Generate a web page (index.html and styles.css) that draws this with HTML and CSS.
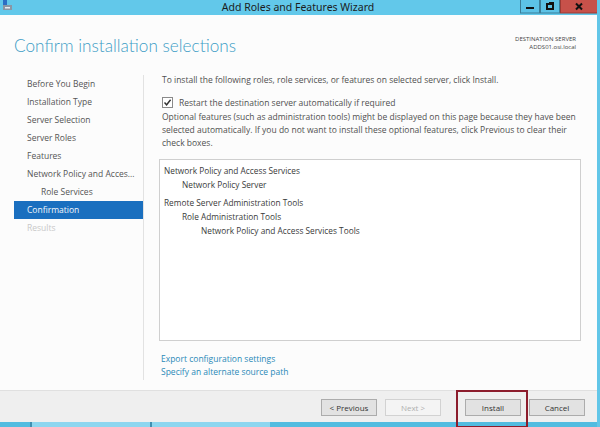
FILE: index.html
```html
<!DOCTYPE html>
<html>
<head>
    <title>Add Roles and Features Wizard</title>
    <link rel="stylesheet" href="styles.css">
</head>
<body>
    <div class="window">
        <div class="titlebar">
            <svg class="app-icon" width="11" height="11" viewBox="0 0 11 11">
                <rect x="1" y="0" width="4" height="5" fill="#2c6fc4"/>
                <rect x="1" y="5" width="9" height="5" fill="#8a96a4"/>
                <rect x="3" y="7" width="5" height="1.5" fill="#e8ecf0"/>
            </svg>
            <div class="title">Add Roles and Features Wizard</div>
            <svg class="win-buttons" width="77" height="14" viewBox="0 0 77 14">
                <rect x="0.5" y="-1" width="19" height="14" fill="#5cc2e6" stroke="#3b7d98"/>
                <rect x="20.5" y="-1" width="19" height="14" fill="#5cc2e6" stroke="#3b7d98"/>
                <rect x="40.5" y="-1" width="37" height="14" fill="#c7514a" stroke="#9a3a34"/>
                <rect x="6" y="7" width="8" height="2" fill="#111"/>
                <rect x="27" y="4" width="6" height="5" fill="none" stroke="#111" stroke-width="2"/>
                <rect x="29" y="2" width="5" height="2" fill="#111"/>
                <path d="M56 3.5 L62 9.5 M62 3.5 L56 9.5" stroke="#111" stroke-width="2"/>
            </svg>
        </div>

        <div class="main">
            <div class="header">
                <h1>Confirm installation selections</h1>
                <div class="dest">
                    DESTINATION SERVER<br>
                    ADDS01.osi.local
                </div>
            </div>

            <div class="columns">
                <ul class="nav">
                    <li>Before You Begin</li>
                    <li>Installation Type</li>
                    <li>Server Selection</li>
                    <li>Server Roles</li>
                    <li>Features</li>
                    <li>Network Policy and Acces...</li>
                    <li class="sub">Role Services</li>
                    <li class="active">Confirmation</li>
                    <li class="disabled">Results</li>
                </ul>

                <div class="content">
                    <p class="intro">To install the following roles, role services, or features on selected server, click Install.</p>
                    <label class="check">
                        <span class="box">
                            <svg width="9" height="9" viewBox="0 0 9 9"><path d="M1.5 4.5 L3.6 6.8 L7.6 1.8" fill="none" stroke="#333" stroke-width="1.4"/></svg>
                        </span>
                        Restart the destination server automatically if required
                    </label>
                    <p class="note">Optional features (such as administration tools) might be displayed on this page because they have been<br>selected automatically. If you do not want to install these optional features, click Previous to clear their<br>check boxes.</p>

                    <div class="listbox">
                        <div class="item">Network Policy and Access Services</div>
                        <div class="item lvl1">Network Policy Server</div>
                        <div class="item group">Remote Server Administration Tools</div>
                        <div class="item lvl1">Role Administration Tools</div>
                        <div class="item lvl2">Network Policy and Access Services Tools</div>
                    </div>

                    <div class="links">
                        <a href="#">Export configuration settings</a>
                        <a href="#">Specify an alternate source path</a>
                    </div>
                </div>
            </div>
        </div>

        <div class="footer">
            <button class="button">&lt; Previous</button>
            <button class="button" disabled>Next &gt;</button>
            <button class="button install">Install</button>
            <button class="button">Cancel</button>
        </div>

        <div class="taskbar">
            <div class="task first"></div>
            <div class="task"></div>
            <div class="task"></div>
        </div>

        <div class="highlight"></div>
    </div>
</body>
</html>
```

FILE: styles.css
```css
body {
    margin: 0;
    font-family: "Open Sans", "Noto Sans", sans-serif;
    background-color: #ffffff;
}
.window {
    position: relative;
    width: 600px;
    height: 427px;
    display: flex;
    flex-direction: column;
    overflow: hidden;
    background-color: #fcfcfc;
    border-right: 3px solid #62c6e8;
    box-sizing: border-box;
}
.titlebar {
    height: 15px;
    background-color: #62c8ea;
    display: flex;
    align-items: flex-start;
    flex-shrink: 0;
}
.app-icon {
    margin-left: 2px;
    width: 11px;
    flex-shrink: 0;
}
.title {
    flex: 1;
    padding-left: 63px;
    text-align: center;
    font-size: 10.5px;
    line-height: 14px;
    color: #1c1c1c;
    font-family: "Noto Sans", "Open Sans", sans-serif;
    white-space: nowrap;
}
.win-buttons {
    flex-shrink: 0;
    display: block;
}
.main {
    flex: 1;
    display: flex;
    flex-direction: column;
    background-color: #fcfcfc;
}
.header {
    height: 55px;
    display: flex;
    justify-content: space-between;
    align-items: flex-start;
    padding: 0 21px 0 14px;
}
h1 {
    margin: 19px 0 0 0;
    font-family: "Lato", "Open Sans", sans-serif;
    font-size: 17.2px;
    font-weight: 300;
    color: #3d9cc6;
    line-height: 24px;
}
.dest {
    margin-top: 20px;
    text-align: right;
    font-size: 6px;
    line-height: 8px;
    color: #444;
}
.columns {
    flex: 1;
    display: flex;
}
.nav {
    list-style: none;
    margin: 5px 0 10px 0;
    padding: 0 0 0 14px;
    width: 129px;
    border-right: 1px solid #e2e2e2;
}
.nav li {
    height: 18px;
    line-height: 18px;
    padding-left: 13px;
    font-size: 8.5px;
    color: #555;
    white-space: nowrap;
}
.nav li.sub {
    padding-left: 27px;
}
.nav li.active {
    background-color: #1a6fbf;
    color: #f4f8fc;
}
.nav li.disabled {
    color: #c8c8c8;
}
.content {
    flex: 1;
    padding: 0 16px 0 15px;
    font-size: 8.5px;
    color: #505050;
}
.intro {
    margin: 3px 0 0 0;
    padding-left: 3px;
    line-height: 13px;
}
.check {
    display: flex;
    align-items: center;
    margin-top: 10px;
    height: 13px;
    line-height: 13px;
    padding-left: 3px;
}
.box {
    width: 9px;
    height: 9px;
    border: 1px solid #8a8a8a;
    background-color: #fff;
    margin-right: 6px;
    display: flex;
}
.note {
    margin: 1px 0 0 0;
    padding-left: 3px;
    line-height: 13px;
}
.listbox {
    margin-top: 10px;
    height: 176px;
    border: 1px solid #cfcfcf;
    background-color: #ffffff;
    padding-top: 4px;
}
.item {
    padding-left: 4px;
    line-height: 14px;
    font-size: 8.3px;
    color: #3a3a3a;
}
.item.group {
    margin-top: 4px;
}
.item.lvl1 {
    padding-left: 22px;
}
.item.lvl2 {
    padding-left: 41px;
}
.links {
    margin-top: 11px;
    display: flex;
    flex-direction: column;
}
.links a {
    color: #2b8ab8;
    text-decoration: none;
    line-height: 13px;
    padding-left: 2px;
}
.footer {
    height: 31px;
    flex-shrink: 0;
    background-color: #efefef;
    border-top: 1px solid #e0e0e0;
    display: flex;
    align-items: center;
    justify-content: flex-end;
    padding-right: 12px;
    gap: 8px;
}
.button {
    width: 56px;
    height: 17px;
    margin-top: 2px;
    padding: 0;
    font-family: "Open Sans", "Noto Sans", sans-serif;
    font-size: 8px;
    color: #333;
    background-color: #e2e2e2;
    border: 1px solid #acacac;
    border-radius: 0;
}
.button:disabled {
    color: #b0b0b0;
    background-color: #f4f4f4;
    border-color: #d2d2d2;
}
.button.install {
    margin-left: 16px;
}
.taskbar {
    height: 5px;
    flex-shrink: 0;
    background-color: #52bce0;
    display: flex;
    margin-right: -3px;
}
.task {
    width: 118px;
    background-color: #8dd6ef;
    border-left: 2px solid #3f8fb0;
}
.task.first {
    width: 30px;
    background-color: #52bce0;
    border-left: none;
}
.highlight {
    position: absolute;
    left: 456px;
    top: 390px;
    width: 68px;
    height: 34px;
    border: 2px solid #8c1c2c;
}
```
